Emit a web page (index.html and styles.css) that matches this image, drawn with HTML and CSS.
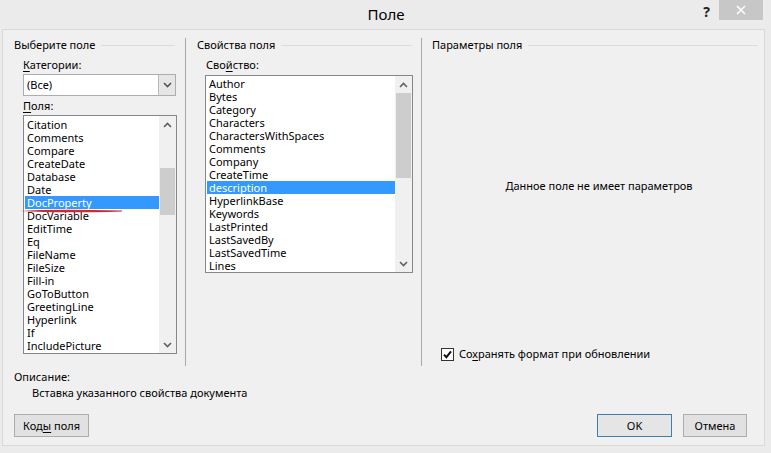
FILE: index.html
```html
<!DOCTYPE html>
<html lang="ru">
<head>
    <meta charset="UTF-8">
    <title>Поле</title>
    <link rel="stylesheet" href="styles.css">
</head>
<body>
    <div class="window">
        <div class="titlebar">
            <div></div>
            <div class="title">Поле</div>
            <div class="controls">
                <span class="help">?</span>
                <span class="close">
                    <svg width="10" height="10" viewBox="0 0 10 10"><path d="M1 1L9 9M9 1L1 9" stroke="#fff" stroke-width="1.6"/></svg>
                </span>
            </div>
        </div>

        <div class="client">
            <div class="groups">
                <!-- Choose field -->
                <section class="group group-fields">
                    <div class="group-head"><span>Выберите поле</span><i></i></div>
                    <div class="group-body">
                        <div class="field-label"><u>К</u>атегории:</div>
                        <div class="combo">
                            <div class="combo-value">(Все)</div>
                            <div class="combo-btn">
                                <svg width="9" height="6" viewBox="0 0 9 6"><polyline points="1,1 4.5,4.5 8,1" fill="none" stroke="#555" stroke-width="1.6"/></svg>
                            </div>
                        </div>
                        <div class="field-label label-gap"><u>П</u>оля:</div>
                        <div class="listbox list-fields">
                            <div class="items">
                                <div class="item">Citation</div>
                                <div class="item">Comments</div>
                                <div class="item">Compare</div>
                                <div class="item">CreateDate</div>
                                <div class="item">Database</div>
                                <div class="item">Date</div>
                                <div class="item selected">DocProperty</div>
                                <div class="item">DocVariable</div>
                                <div class="item">EditTime</div>
                                <div class="item">Eq</div>
                                <div class="item">FileName</div>
                                <div class="item">FileSize</div>
                                <div class="item">Fill-in</div>
                                <div class="item">GoToButton</div>
                                <div class="item">GreetingLine</div>
                                <div class="item">Hyperlink</div>
                                <div class="item">If</div>
                                <div class="item">IncludePicture</div>
                            </div>
                            <div class="scrollbar">
                                <div class="arrow"><svg width="9" height="6" viewBox="0 0 9 6"><polyline points="1,5 4.5,1.5 8,5" fill="none" stroke="#606060" stroke-width="1.6"/></svg></div>
                                <div class="track"><div class="thumb" style="margin-top: 35px; height: 47px;"></div></div>
                                <div class="arrow"><svg width="9" height="6" viewBox="0 0 9 6"><polyline points="1,1 4.5,4.5 8,1" fill="none" stroke="#606060" stroke-width="1.6"/></svg></div>
                            </div>
                            <!-- red pen mark under the chosen field -->
                            <svg class="pen-mark" width="104" height="6" viewBox="0 0 104 6"><path d="M0 3 Q30 0.6 102 2.4 L102 3.4 Q40 5.4 0 3Z" fill="#d9262b"/></svg>
                        </div>
                    </div>
                </section>

                <!-- Field properties -->
                <section class="group group-props">
                    <div class="group-head"><span>Свойства поля</span><i></i></div>
                    <div class="group-body">
                        <div class="field-label prop-label">Сво<u>й</u>ство:</div>
                        <div class="listbox list-props">
                            <div class="items">
                                <div class="item">Author</div>
                                <div class="item">Bytes</div>
                                <div class="item">Category</div>
                                <div class="item">Characters</div>
                                <div class="item">CharactersWithSpaces</div>
                                <div class="item">Comments</div>
                                <div class="item">Company</div>
                                <div class="item">CreateTime</div>
                                <div class="item selected">description</div>
                                <div class="item">HyperlinkBase</div>
                                <div class="item">Keywords</div>
                                <div class="item">LastPrinted</div>
                                <div class="item">LastSavedBy</div>
                                <div class="item">LastSavedTime</div>
                                <div class="item">Lines</div>
                            </div>
                            <div class="scrollbar">
                                <div class="arrow"><svg width="9" height="6" viewBox="0 0 9 6"><polyline points="1,5 4.5,1.5 8,5" fill="none" stroke="#606060" stroke-width="1.6"/></svg></div>
                                <div class="track"><div class="thumb" style="margin-top: 0; height: 85px;"></div></div>
                                <div class="arrow"><svg width="9" height="6" viewBox="0 0 9 6"><polyline points="1,1 4.5,4.5 8,1" fill="none" stroke="#606060" stroke-width="1.6"/></svg></div>
                            </div>
                        </div>
                    </div>
                </section>

                <!-- Field parameters -->
                <section class="group group-params">
                    <div class="group-head"><span>Параметры поля</span><i></i></div>
                    <div class="params-body">
                        <div class="no-params">Данное поле не имеет параметров</div>
                        <label class="keep-format">
                            <span class="checkbox">
                                <svg width="11" height="11" viewBox="0 0 11 11"><path d="M2 5.6L4.4 8.2L9 2.4" fill="none" stroke="#111" stroke-width="2"/></svg>
                            </span>
                            <span>Со<u>х</u>ранять формат при обновлении</span>
                        </label>
                    </div>
                </section>
            </div>

            <div class="description">
                <div>Описание:</div>
                <div class="desc-text">Вставка указанного свойства документа</div>
            </div>

            <div class="footer">
                <button class="btn">Код<u>ы</u> поля</button>
                <div class="footer-right">
                    <button class="btn btn-default">OK</button>
                    <button class="btn btn-cancel">Отмена</button>
                </div>
            </div>
        </div>
    </div>
</body>
</html>
```

FILE: styles.css
```css
body {
    margin: 0;
    background-color: #ebebeb;
    font-family: "Noto Sans", "Open Sans", sans-serif;
    font-size: 11px;
    color: #000;
}
u {
    text-decoration: underline;
    text-underline-offset: 2px;
}
.window {
    width: 771px;
    height: 453px;
    display: flex;
    flex-direction: column;
}
.titlebar {
    height: 29px;
    display: grid;
    grid-template-columns: 1fr auto 1fr;
}
.title {
    font-size: 15px;
    line-height: 29px;
    padding-left: 1px;
}
.controls {
    justify-self: end;
    display: flex;
    align-items: flex-start;
    padding-right: 8px;
}
.help {
    font-weight: bold;
    font-size: 14px;
    line-height: 24px;
    color: #222;
    margin-right: 9px;
}
.close {
    width: 44px;
    height: 20px;
    background-color: #c7c7c7;
    display: flex;
    align-items: center;
    justify-content: center;
}
.client {
    flex: 1;
    margin: 0 6px 7px 2px;
    border: 1px solid #d9d9d9;
    background-color: #f0f0f0;
    display: flex;
    flex-direction: column;
}
.groups {
    display: flex;
    margin-top: 8px;
    height: 328px;
}
.group {
    box-sizing: border-box;
}
.group-fields {
    width: 182px;
    padding: 0 10px 0 11px;
}
.group-props {
    width: 236px;
    border-left: 1px solid #a9a9a9;
    padding: 0 9px 0 11px;
}
.group-params {
    flex: 1;
    border-left: 1px solid #a9a9a9;
    padding: 0 6px 0 10px;
    display: flex;
    flex-direction: column;
}
.group-head {
    display: flex;
    align-items: center;
    height: 14px;
    line-height: 14px;
    white-space: nowrap;
}
.group-head i {
    flex: 1;
    margin-left: 6px;
    border-top: 1px solid #dcdcdc;
}
.group-body {
    padding-left: 9px;
}
.group-props .group-body {
    padding-left: 8px;
}
.field-label {
    line-height: 14px;
    margin-top: 6px;
    margin-bottom: 2px;
}
.label-gap {
    margin-top: 3px;
}
.prop-label {
    padding-left: 1px;
    margin-bottom: 3px;
}
.combo {
    display: flex;
    width: 153px;
    height: 22px;
    box-sizing: border-box;
    border: 1px solid #abadb3;
    background-color: #fff;
}
.combo-value {
    flex: 1;
    padding-left: 3px;
    line-height: 20px;
}
.combo-btn {
    width: 16px;
    background-color: #e6e6e6;
    border-left: 1px solid #b9b9b9;
    display: flex;
    align-items: center;
    justify-content: center;
}
.listbox {
    position: relative;
    display: flex;
    box-sizing: border-box;
    border: 1px solid #828790;
    background-color: #fff;
}
.list-fields {
    width: 154px;
    height: 239px;
}
.list-props {
    width: 208px;
    height: 198px;
}
.items {
    flex: 1;
    padding: 2px 0 0 1px;
}
.list-props .items {
    padding-top: 1px;
}
.item {
    height: 13px;
    line-height: 13px;
    padding-left: 2px;
    white-space: nowrap;
}
.item.selected {
    background-color: #3399ff;
    color: #fff;
}
.scrollbar {
    width: 17px;
    background-color: #f0f0f0;
    display: flex;
    flex-direction: column;
}
.arrow {
    height: 17px;
    display: flex;
    align-items: center;
    justify-content: center;
}
.track {
    flex: 1;
}
.thumb {
    margin: 0 1px;
    background-color: #cdcdcd;
}
.pen-mark {
    position: absolute;
    left: -4px;
    top: 92px;
    z-index: 2;
}
.params-body {
    flex: 1;
    display: flex;
    flex-direction: column;
}
.no-params {
    margin-top: 127px;
    line-height: 14px;
    text-align: center;
    padding-left: 8px;
}
.keep-format {
    margin-top: auto;
    margin-bottom: 5px;
    margin-left: 9px;
    display: flex;
    align-items: center;
    gap: 5px;
    line-height: 14px;
}
.checkbox {
    width: 13px;
    height: 13px;
    box-sizing: border-box;
    border: 1px solid #333;
    background-color: #fff;
    display: flex;
    align-items: center;
    justify-content: center;
}
.description {
    padding-left: 11px;
    margin-top: 4px;
    line-height: 14px;
}
.desc-text {
    margin-top: 2px;
    padding-left: 18px;
}
.footer {
    display: flex;
    justify-content: space-between;
    margin-top: 14px;
    padding: 0 17px 0 11px;
}
.footer-right {
    display: flex;
    gap: 11px;
}
.btn {
    width: 75px;
    height: 23px;
    padding: 0;
    font: inherit;
    color: #000;
    background-color: #e1e1e1;
    border: 1px solid #adadad;
}
.btn-default {
    border-color: #3c7fb1;
    background-color: #e5e5e5;
}
.btn-cancel {
    width: 64px;
}
```
